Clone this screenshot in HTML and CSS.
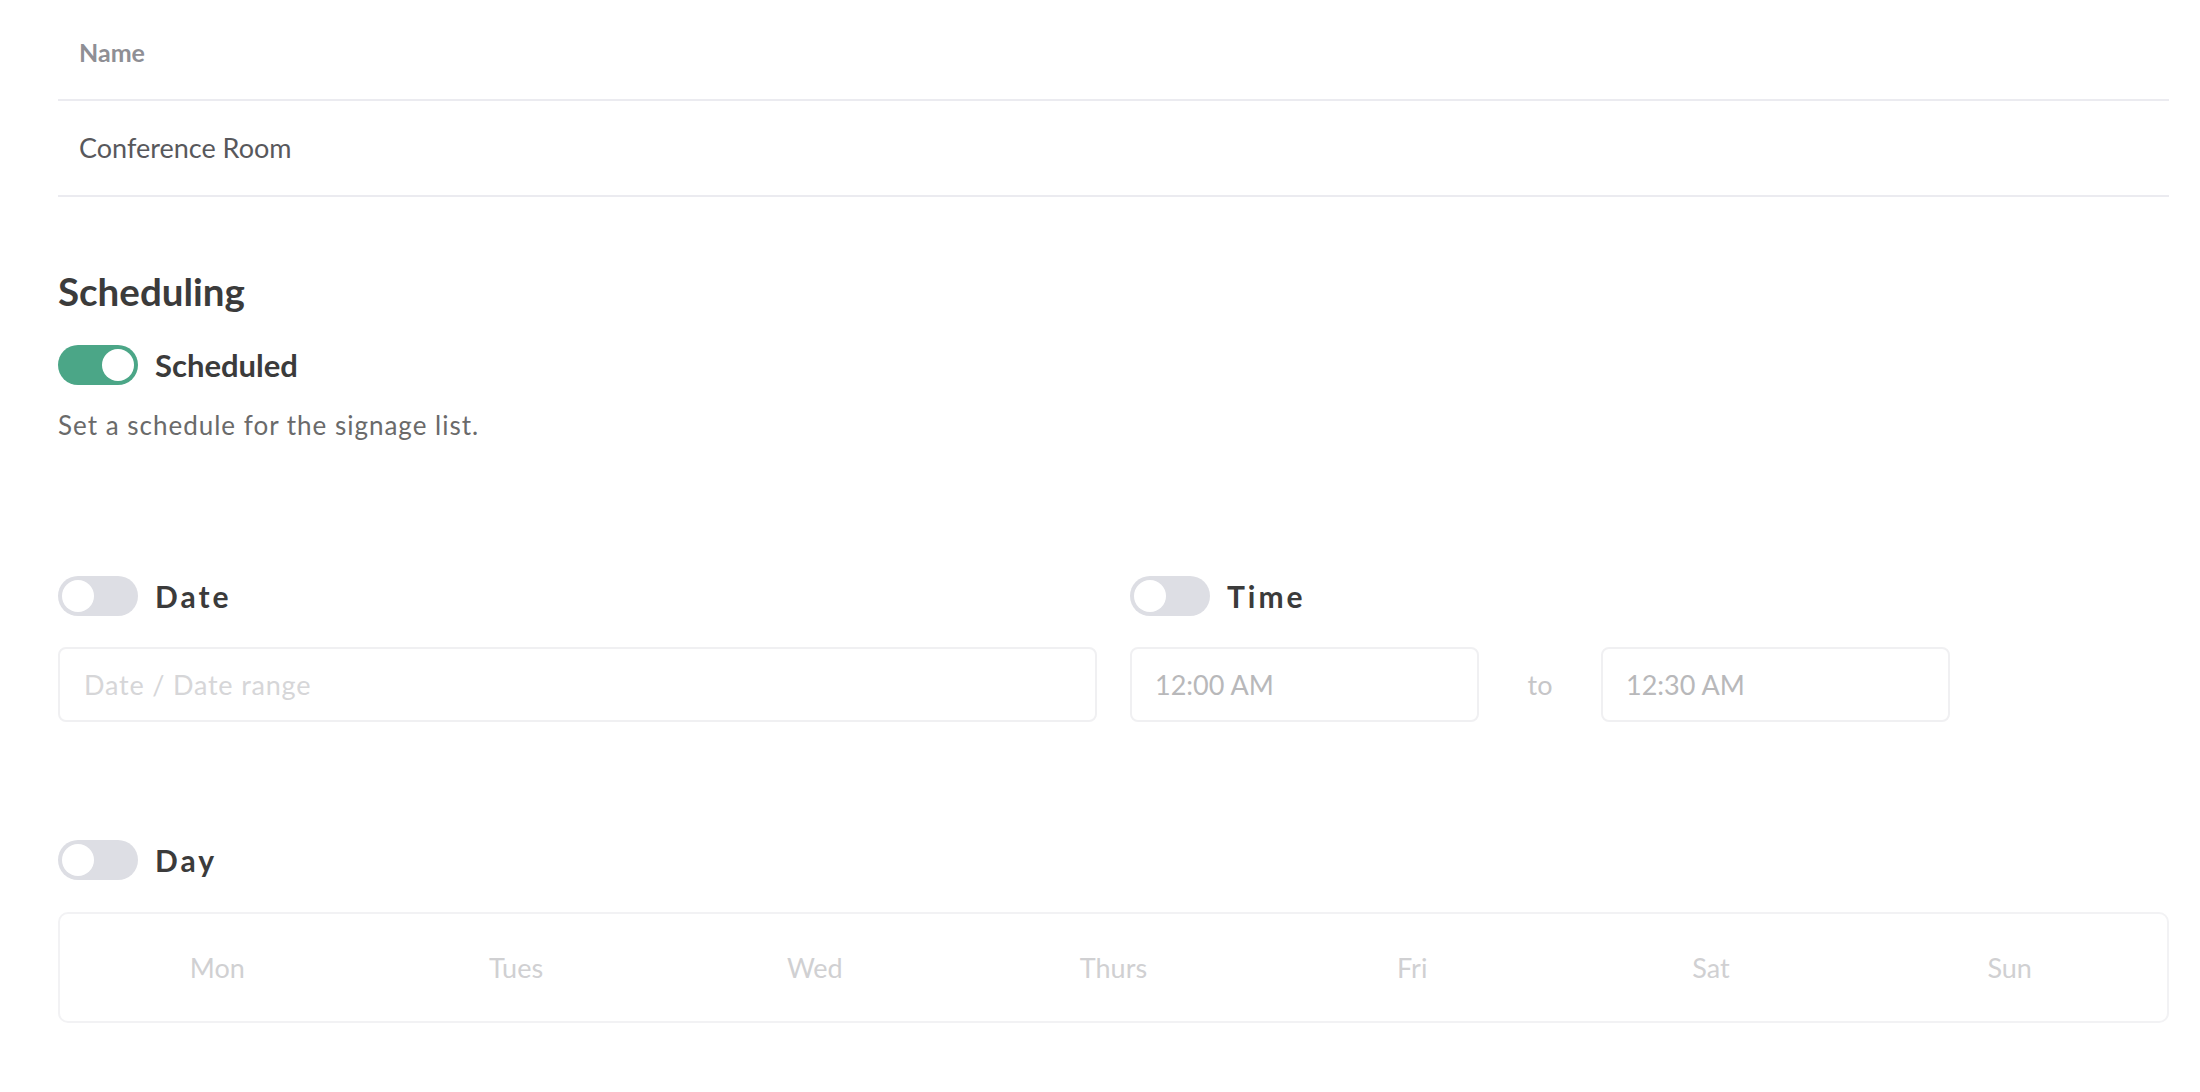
FILE: index.html
```html
<!DOCTYPE html>
<html lang="en">
<head>
<meta charset="utf-8">
<title>Signage list</title>
<link rel="stylesheet" href="styles.css">
</head>
<body>
<div class="page">
  <div class="table">
    <div class="row row-head"><span class="cell-head">Name</span></div>
    <div class="row"><span class="cell">Conference Room</span></div>
  </div>

  <h2 class="section-title">Scheduling</h2>

  <div class="switch-row">
    <span class="switch on"><span class="knob"></span></span>
    <span class="switch-label">Scheduled</span>
  </div>
  <p class="desc">Set a schedule for the signage list.</p>

  <div class="grid">
    <div class="col">
      <div class="switch-row">
        <span class="switch"><span class="knob"></span></span>
        <span class="switch-label spaced">Date</span>
      </div>
      <div class="input input-date"><span class="ph">Date / Date range</span></div>
    </div>
    <div class="col">
      <div class="switch-row">
        <span class="switch"><span class="knob"></span></span>
        <span class="switch-label spaced">Time</span>
      </div>
      <div class="time-row">
        <div class="input input-time"><span class="val">12:00 AM</span></div>
        <span class="to">to</span>
        <div class="input input-time"><span class="val">12:30 AM</span></div>
      </div>
    </div>
  </div>

  <div class="switch-row day-switch">
    <span class="switch"><span class="knob"></span></span>
    <span class="switch-label spaced">Day</span>
  </div>
  <div class="days">
    <span class="day">Mon</span>
    <span class="day">Tues</span>
    <span class="day">Wed</span>
    <span class="day">Thurs</span>
    <span class="day">Fri</span>
    <span class="day">Sat</span>
    <span class="day">Sun</span>
  </div>
</div>
</body>
</html>
```

FILE: styles.css
```css
* { box-sizing: border-box; }

html, body {
  margin: 0;
  padding: 0;
  background: #ffffff;
}

body {
  font-family: Lato, "Open Sans", "Liberation Sans", sans-serif;
  color: #3c3c3c;
}

.page {
  width: 2200px;
  padding: 5px 31px 0 58px;
}

.table {
  display: flex;
  flex-direction: column;
}

.row {
  height: 96px;
  display: flex;
  align-items: center;
  padding-left: 21px;
  border-bottom: 2px solid #ebebf0;
}

.cell-head {
  font-size: 25px;
  font-weight: 700;
  color: #8f8f95;
  line-height: 30px;
}

.cell {
  font-size: 27px;
  color: #58585c;
  line-height: 32px;
}

.section-title {
  margin: 71px 0 0 0;
  font-size: 38.5px;
  line-height: 46px;
  font-weight: 700;
  color: #3b3b3b;
}

.switch-row {
  display: flex;
  align-items: center;
  gap: 17px;
  height: 40px;
  margin-top: 31px;
}

.switch {
  width: 80px;
  height: 40px;
  border-radius: 20px;
  background: #dddee4;
  padding: 4px;
  display: flex;
  justify-content: flex-start;
  flex: none;
}

.switch.on {
  background: #4ba687;
  justify-content: flex-end;
}

.knob {
  width: 32px;
  height: 32px;
  border-radius: 50%;
  background: #ffffff;
}

.switch-label {
  font-size: 31px;
  line-height: 40px;
  font-weight: 700;
  color: #3b3b3b;
}

.switch-label.spaced {
  font-size: 30px;
  letter-spacing: 3px;
}

.desc {
  margin: 25px 0 0 0;
  font-size: 26px;
  line-height: 30px;
  color: #6a6a6a;
  letter-spacing: 1px;
}

.grid {
  display: grid;
  grid-template-columns: 1fr 1fr;
  column-gap: 33px;
  margin-top: 104px;
}

.grid .switch-row {
  margin-top: 32px;
}

.input {
  height: 75px;
  border: 2px solid #f0f0f2;
  border-radius: 8px;
  display: flex;
  align-items: center;
  margin-top: 31px;
  font-size: 27px;
  line-height: 32px;
}

.input-date {
  padding-left: 24px;
}

.ph {
  color: #d6d6d8;
  letter-spacing: 0.8px;
}

.time-row {
  display: flex;
  align-items: center;
  margin-top: 31px;
}

.time-row .input {
  margin-top: 0;
}

.input-time {
  width: 349px;
  padding-left: 23px;
}

.val {
  color: #b8b8ba;
}

.to {
  width: 122px;
  text-align: center;
  font-size: 27px;
  line-height: 32px;
  color: #c6c6c8;
}

.day-switch {
  margin-top: 118px;
}

.days {
  margin-top: 32px;
  height: 111px;
  border: 2px solid #f2f2f4;
  border-radius: 10px;
  padding: 0 8px;
  display: grid;
  grid-template-columns: repeat(7, 1fr);
  align-items: center;
}

.day {
  text-align: center;
  font-size: 27px;
  line-height: 32px;
  color: #d0d0d2;
}
```
